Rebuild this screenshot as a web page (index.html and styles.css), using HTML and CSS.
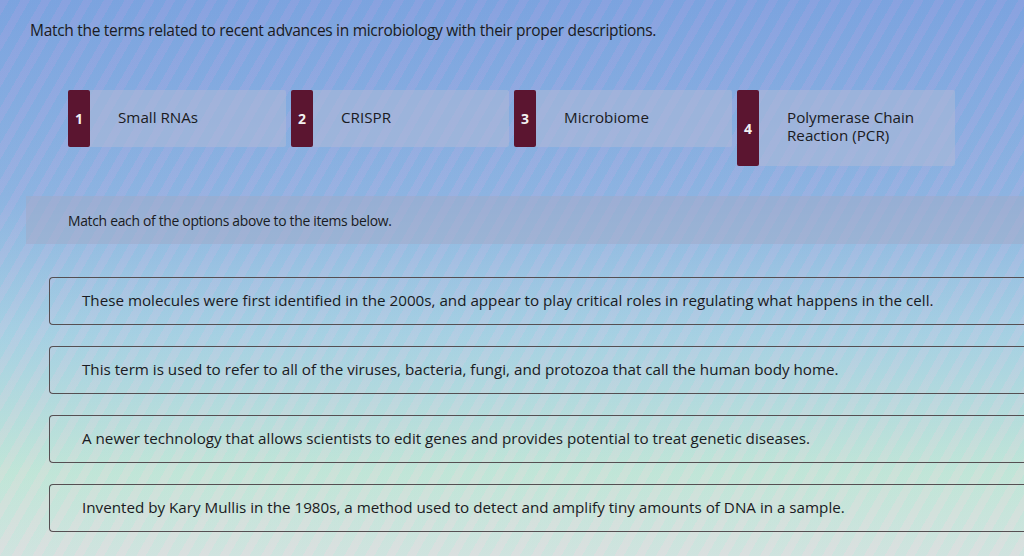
FILE: index.html
```html
<!DOCTYPE html>
<html lang="en">
<head>
    <meta charset="UTF-8">
    <meta name="viewport" content="width=device-width, initial-scale=1.0">
    <title>Matching</title>
    <link rel="stylesheet" href="styles.css">
</head>
<body>

    <div class="screen">
        <p class="prompt">Match the terms related to recent advances in microbiology with their proper descriptions.</p>

        <div class="options">
            <div class="option">
                <span class="badge">1</span>
                <span class="label">Small RNAs</span>
            </div>
            <div class="option">
                <span class="badge">2</span>
                <span class="label">CRISPR</span>
            </div>
            <div class="option">
                <span class="badge">3</span>
                <span class="label">Microbiome</span>
            </div>
            <div class="option">
                <span class="badge">4</span>
                <span class="label">Polymerase Chain<br>Reaction (PCR)</span>
            </div>
        </div>

        <div class="instructions">Match each of the options above to the items below.</div>

        <div class="items">
            <div class="item">These molecules were first identified in the 2000s, and appear to play critical roles in regulating what happens in the cell.</div>
            <div class="item">This term is used to refer to all of the viruses, bacteria, fungi, and protozoa that call the human body home.</div>
            <div class="item">A newer technology that allows scientists to edit genes and provides potential to treat genetic diseases.</div>
            <div class="item">Invented by Kary Mullis in the 1980s, a method used to detect and amplify tiny amounts of DNA in a sample.</div>
        </div>
    </div>

</body>
</html>
```

FILE: styles.css
```css
/* General */
body {
    margin: 0;
    font-family: "Open Sans", Lato, sans-serif;
    color: #1a1b22;
    height: 556px;
    overflow: hidden;
    background:
        repeating-linear-gradient(120deg, rgba(255, 190, 220, 0.1) 0 8px, rgba(120, 220, 210, 0.07) 8px 18px),
        linear-gradient(180deg, #7c9fe0 0%, #8eb0e2 35%, #a9cfe4 60%, #c6e6d8 85%, #d6e4e0 100%);
}

.screen {
    padding: 19px 0 0 30px;
}

/* Prompt */
.prompt {
    margin: 0;
    font-size: 15.5px;
    letter-spacing: -0.3px;
}

/* Options row */
.options {
    display: grid;
    grid-template-columns: repeat(4, 218px);
    gap: 5px;
    align-items: start;
    margin: 49px 0 0 38px;
}

.option {
    display: flex;
    background-color: rgba(175, 185, 215, 0.55);
    border-radius: 2px;
}

.badge {
    width: 22px;
    min-height: 57px;
    background-color: #5b1530;
    color: #f2f2f2;
    font-weight: bold;
    font-size: 14px;
    display: flex;
    align-items: center;
    justify-content: center;
    border-radius: 2px;
    flex-shrink: 0;
}

.option:last-child .badge {
    min-height: 76px;
}

.label {
    padding: 18px 0 0 28px;
    font-size: 15.2px;
    line-height: 18px;
}

/* Instructions bar */
.instructions {
    margin: 30px 0 0 -4px;
    height: 48px;
    padding-left: 42px;
    display: flex;
    align-items: center;
    font-size: 13.9px;
    letter-spacing: -0.3px;
    background-color: rgba(160, 170, 200, 0.5);
}

/* Description items */
.items {
    display: flex;
    flex-direction: column;
    gap: 21px;
    margin: 33px 0 0 19px;
}

.item {
    height: 44px;
    display: flex;
    align-items: center;
    padding: 0 0 2px 32px;
    border: 1px solid #554f52;
    border-right: none;
    border-radius: 4px 0 0 4px;
    font-size: 15.2px;
    white-space: nowrap;
}
```
